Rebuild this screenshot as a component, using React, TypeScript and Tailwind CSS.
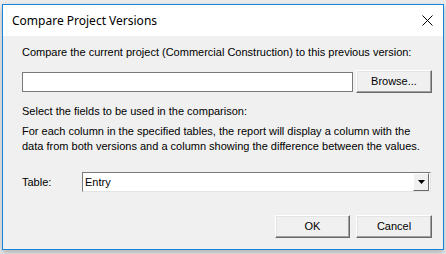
const FONT = { fontFamily: '"Liberation Sans", Arial, sans-serif' };

function Button({ label, w }: { label: string; w: string }) {
  return (
    <button
      className={`${w} h-[23px] bg-[#f0f0f0] border border-t-white border-l-white border-b-[#696969] border-r-[#696969] shadow-[inset_-1px_-1px_0_#a0a0a0,inset_1px_1px_0_#e3e3e3] text-[11px] text-black flex items-center justify-center`}
      style={FONT}
    >
      {label}
    </button>
  );
}

export default function App() {
  return (
    <div className="w-[446px] h-[254px] bg-[#ececec] pt-[4px] pl-[2px] overflow-hidden">
      <div className="w-[442px] h-[246px] border border-[#1883d7] flex flex-col bg-[#f0f0f0] shadow-[0_3px_6px_rgba(0,0,0,0.25)]">
        {/* title bar */}
        <div className="h-[31px] bg-white flex items-center pl-[9px] pr-[10px] shrink-0">
          <span className="flex-1 text-[12px] text-black" style={{ fontFamily: '"Noto Sans", "Open Sans", sans-serif' }}>
            Compare Project Versions
          </span>
          <svg width="11" height="11" viewBox="0 0 11 11" className="mr-[0px]">
            <path d="M0.5 0.5 L10.5 10.5 M10.5 0.5 L0.5 10.5" stroke="#000" strokeWidth="1" />
          </svg>
        </div>

        {/* body */}
        <div className="flex flex-col pl-[19px] pr-[11px] text-[11px] text-black" style={FONT}>
          <div className="mt-[10px] leading-[13px]">
            Compare the current project (Commercial Construction) to this previous version:
          </div>

          <div className="mt-[11px] flex items-center gap-[3px]">
            <div className="w-[331px] h-[20px] bg-white border border-[#7a7a7a]" />
            <Button label="Browse..." w="w-[76px]" />
          </div>

          <div className="mt-[12px] leading-[13px]">Select the fields to be used in the comparison:</div>

          <div className="mt-[6px] leading-[15px]">
            For each column in the specified tables, the report will display a column with the
            <br />
            data from both versions and a column showing the difference between the values.
          </div>

          <div className="mt-[18px] flex items-center">
            <span className="w-[60px]">Table:</span>
            <div className="w-[349px] h-[20px] bg-white border border-t-[#7a7a7a] border-l-[#7a7a7a] border-b-[#e3e3e3] border-r-[#e3e3e3] flex items-center">
              <span className="flex-1 pl-[2px]">Entry</span>
              <div className="w-[16px] h-[18px] bg-[#f0f0f0] border border-t-white border-l-white border-b-[#696969] border-r-[#696969] flex items-center justify-center mr-[1px]">
                <svg width="7" height="4" viewBox="0 0 7 4">
                  <path d="M0 0 H7 L3.5 4 Z" fill="#000" />
                </svg>
              </div>
            </div>
          </div>

          <div className="mt-[23px] flex justify-end gap-[6px]">
            <Button label="OK" w="w-[75px]" />
            <Button label="Cancel" w="w-[76px]" />
          </div>
        </div>
      </div>
    </div>
  );
}
